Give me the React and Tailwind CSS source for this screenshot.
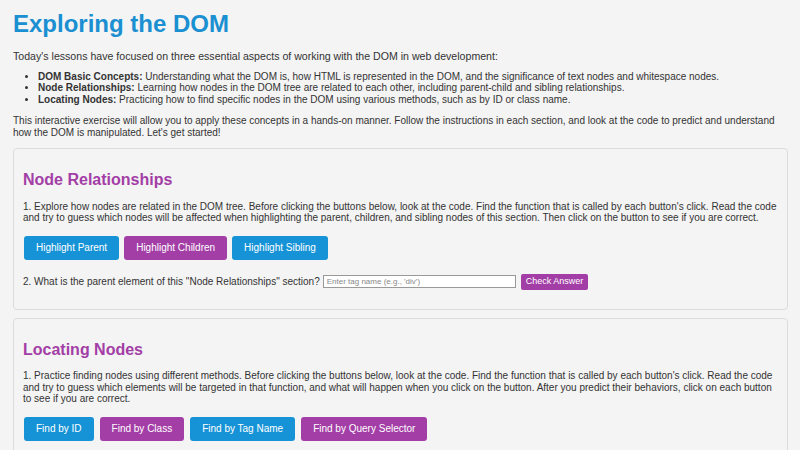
import React from 'react';

const blueBtn = 'bg-[#1693d6] text-white rounded-[3px] px-3 h-[24px] text-[10px] leading-none';
const purpleBtn = 'bg-[#a33ea6] text-white rounded-[3px] px-3 h-[24px] text-[10px] leading-none';

function Section({ title, children }) {
  return (
    <section className="border border-[#dcdcdc] rounded-[4px] px-[9px] pt-[22px] pb-[19px]">
      <h2 className="text-[16px] leading-[1.15] font-bold text-[#a33ea6] mb-[11px]">{title}</h2>
      {children}
    </section>
  );
}

export default function App() {
  return (
    <div
      className="min-h-[450px] bg-[#f4f4f4] text-[#333] pl-[13px] pr-[12px] pt-[10px] text-[10px] leading-[1.15]"
      style={{ fontFamily: '"Liberation Sans", Arial, sans-serif' }}
    >
      <h1 className="text-[24px] leading-[1.15] font-bold text-[#1a8fd1]">Exploring the DOM</h1>

      <p className="mt-[12px] text-[10.6px]">
        Today's lessons have focused on three essential aspects of working with the DOM in web development:
      </p>

      <ul className="list-disc pl-[25px] mt-[9px]">
        <li>
          <b>DOM Basic Concepts:</b> Understanding what the DOM is, how HTML is represented in the DOM, and the
          significance of text nodes and whitespace nodes.
        </li>
        <li>
          <b>Node Relationships:</b> Learning how nodes in the DOM tree are related to each other, including
          parent-child and sibling relationships.
        </li>
        <li>
          <b>Locating Nodes:</b> Practicing how to find specific nodes in the DOM using various methods, such as by
          ID or class name.
        </li>
      </ul>

      <p className="mt-[10px]">
        This interactive exercise will allow you to apply these concepts in a hands-on manner. Follow the instructions
        in each section, and look at the code to predict and understand how the DOM is manipulated. Let's get started!
      </p>

      <div className="mt-[10px] flex flex-col gap-[8px]">
        <Section title="Node Relationships">
          <p>
            1. Explore how nodes are related in the DOM tree. Before clicking the buttons below, look at the code. Find
            the function that is called by each button's click. Read the code and try to guess which nodes will be
            affected when highlighting the parent, children, and sibling nodes of this section. Then click on the button
            to see if you are correct.
          </p>
          <div className="flex gap-[5px] mt-[12px] pl-[1px]">
            <button className={blueBtn}>Highlight Parent</button>
            <button className={purpleBtn}>Highlight Children</button>
            <button className={blueBtn}>Highlight Sibling</button>
          </div>
          <div className="flex items-center mt-[14px]">
            <span>2. What is the parent element of this "Node Relationships" section?</span>
            <input
              className="ml-[3px] w-[193px] h-[13px] bg-white border border-[#999] px-[3px] text-[8px] placeholder:text-[#888] outline-none"
              placeholder="Enter tag name (e.g., 'div')"
            />
            <button className="ml-[5px] bg-[#a33ea6] text-white rounded-[2px] px-[5px] h-[16px] text-[9px] leading-none">
              Check Answer
            </button>
          </div>
        </Section>

        <Section title="Locating Nodes">
          <p>
            1. Practice finding nodes using different methods. Before clicking the buttons below, look at the code. Find
            the function that is called by each button's click. Read the code and try to guess which elements will be
            targeted in that function, and what will happen when you click on the button. After you predict their
            behaviors, click on each button to see if you are correct.
          </p>
          <div className="flex gap-[6px] mt-[12px] pl-[1px]">
            <button className={blueBtn}>Find by ID</button>
            <button className={purpleBtn}>Find by Class</button>
            <button className={blueBtn}>Find by Tag Name</button>
            <button className={purpleBtn}>Find by Query Selector</button>
          </div>
        </Section>
      </div>
    </div>
  );
}
